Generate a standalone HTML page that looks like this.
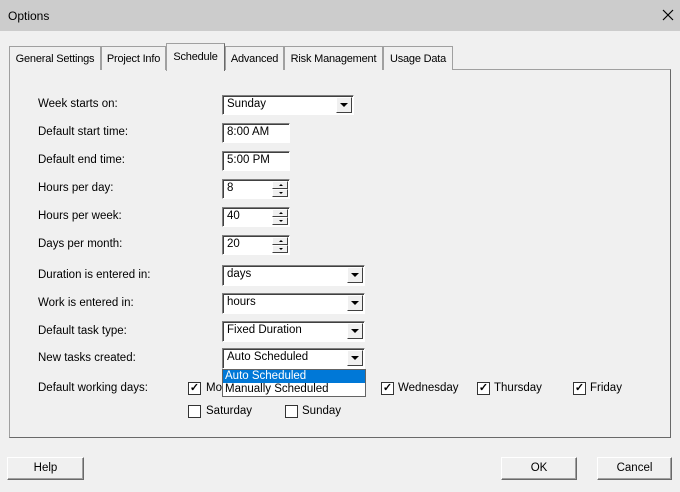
<!DOCTYPE html>
<html><head><style>
*{box-sizing:border-box;margin:0;padding:0}
body{width:680px;height:492px;background:#f0f0f0;font-family:"Liberation Sans",sans-serif;font-size:11.5px;color:#000;position:relative;overflow:hidden}
.a{position:absolute}
.title{left:0;top:0;width:680px;height:31px;background:#cccccc}
.tab{position:absolute;top:46px;height:24px;border:1px solid #a0a0a0;border-bottom:none;background:#f0f0f0;padding:6px 0 0 0;text-align:center;font-size:11px;letter-spacing:-0.2px;white-space:nowrap;overflow:hidden}
.panel{left:9px;top:69px;width:662px;height:369px;border:1px solid #a0a0a0;border-right-color:#696969;border-bottom-color:#696969;background:#f0f0f0}
.lbl{position:absolute;left:38px}
.box{position:absolute;background:#fff;border:1px solid;border-color:#808080 #fff #fff #808080;box-shadow:inset 1px 1px 0 #404040;padding:2px 0 0 4px}
.dd{position:absolute;width:16px;height:16px;right:1px;top:1px;background:#f0f0f0;border:1px solid;border-color:#fff #404040 #404040 #fff}
.dd:after{content:"";position:absolute;left:3px;top:5px;border-left:4px solid transparent;border-right:4px solid transparent;border-top:4px solid #000}
.sp{position:absolute;right:1px;width:16px;height:8px;background:#f0f0f0;border:1px solid;border-color:#fff #404040 #404040 #fff}
.sp.u:after{content:"";position:absolute;left:6px;top:2px;border-left:2px solid transparent;border-right:2px solid transparent;border-bottom:2px solid #000}
.sp.d:after{content:"";position:absolute;left:6px;top:2px;border-left:2px solid transparent;border-right:2px solid transparent;border-top:2px solid #000}
.cb{position:absolute;width:13px;height:13px;background:#fff;border:1px solid #333;font-size:11px;line-height:11px;text-align:center;font-weight:bold}
.btn{position:absolute;top:457px;height:23px;border:1px solid;border-color:#fff #696969 #696969 #fff;box-shadow:inset -1px -1px 0 #a0a0a0;text-align:center;padding-top:4px}
</style></head><body>
<div class="a title"></div>
<div class="a" style="left:8px;top:9px;font-size:12px">Options</div>
<svg class="a" style="left:662px;top:9px" width="12" height="12"><path d="M1 1L11 11M11 1L1 11" stroke="#000" stroke-width="1.2"/></svg>
<div class="a panel"></div>
<div class="tab" style="left:9px;width:92px">General Settings</div>
<div class="tab" style="left:101px;width:65px">Project Info</div>
<div class="tab" style="left:225px;width:59px">Advanced</div>
<div class="tab" style="left:284px;width:99px">Risk Management</div>
<div class="tab" style="left:383px;width:70px">Usage Data</div>
<div class="tab" style="left:166px;width:59px;top:43px;height:28px;padding-top:7px;border-right-color:#696969">Schedule</div>

<div class="lbl" style="top:98px">Week starts on:</div>
<div class="lbl" style="top:126px">Default start time:</div>
<div class="lbl" style="top:154px">Default end time:</div>
<div class="lbl" style="top:182px">Hours per day:</div>
<div class="lbl" style="top:210px">Hours per week:</div>
<div class="lbl" style="top:238px">Days per month:</div>
<div class="lbl" style="top:269px">Duration is entered in:</div>
<div class="lbl" style="top:297px">Work is entered in:</div>
<div class="lbl" style="top:325px">Default task type:</div>
<div class="lbl" style="top:352px">New tasks created:</div>
<div class="lbl" style="top:382px">Default working days:</div>

<div class="box" style="left:222px;top:95px;width:132px;height:20px">Sunday<div class="dd"></div></div>
<div class="box" style="left:222px;top:123px;width:68px;height:20px">8:00 AM</div>
<div class="box" style="left:222px;top:151px;width:68px;height:20px">5:00 PM</div>
<div class="box" style="left:222px;top:179px;width:68px;height:20px">8<div class="sp u" style="top:1px"></div><div class="sp d" style="top:9px"></div></div>
<div class="box" style="left:222px;top:207px;width:68px;height:20px">40<div class="sp u" style="top:1px"></div><div class="sp d" style="top:9px"></div></div>
<div class="box" style="left:222px;top:235px;width:68px;height:20px">20<div class="sp u" style="top:1px"></div><div class="sp d" style="top:9px"></div></div>
<div class="box" style="left:222px;top:265px;width:143px;height:21px">days<div class="dd"></div></div>
<div class="box" style="left:222px;top:293px;width:143px;height:21px">hours<div class="dd"></div></div>
<div class="box" style="left:222px;top:321px;width:143px;height:21px">Fixed Duration<div class="dd"></div></div>
<div class="box" style="left:222px;top:348px;width:143px;height:21px">Auto Scheduled<div class="dd"></div></div>

<div class="cb" style="left:188px;top:382px">✓</div><div class="a" style="left:206px;top:382px">Mo</div>
<div class="cb" style="left:381px;top:382px">✓</div><div class="a" style="left:398px;top:382px">Wednesday</div>
<div class="cb" style="left:477px;top:382px">✓</div><div class="a" style="left:494px;top:382px">Thursday</div>
<div class="cb" style="left:573px;top:382px">✓</div><div class="a" style="left:590px;top:382px">Friday</div>
<div class="cb" style="left:188px;top:405px"></div><div class="a" style="left:206px;top:405px">Saturday</div>
<div class="cb" style="left:285px;top:405px"></div><div class="a" style="left:302px;top:405px">Sunday</div>

<div class="a" style="left:222px;top:369px;width:144px;height:28px;background:#fff;border:1px solid #646464">
<div style="background:#0078d7;color:#fff;height:13px;line-height:13px;padding-left:2px">Auto Scheduled</div>
<div style="height:13px;line-height:13px;padding-left:2px">Manually Scheduled</div>
</div>

<div class="btn" style="left:7px;width:77px">Help</div>
<div class="btn" style="left:501px;width:76px">OK</div>
<div class="btn" style="left:597px;width:75px">Cancel</div>
</body></html>
